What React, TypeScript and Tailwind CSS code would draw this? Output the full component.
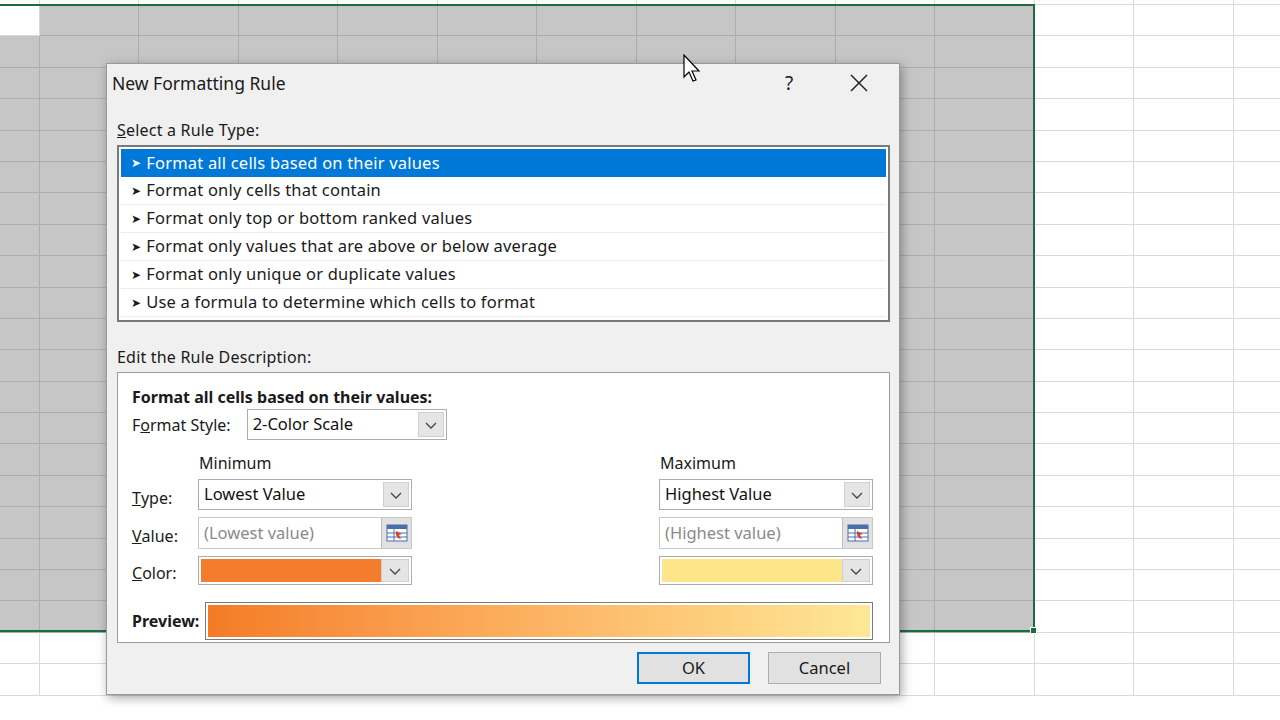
import React from "react";

const cols = [40, 99, 100, 99, 100, 99, 100, 99, 100, 99, 100, 99, 100, 48];

function Chevron() {
  return (
    <svg width="14" height="14" viewBox="0 0 14 14"><path d="M2 5 L7 10 L12 5" fill="none" stroke="#444" strokeWidth="1.3" /></svg>
  );
}

function Drop({ w, text }: { w: string; text: string }) {
  return (
    <div className={`flex h-[31px] ${w} border border-[#adadad] bg-white`}>
      <div className="flex-1 pl-[5px] flex items-center text-[16.5px] text-[#111]">{text}</div>
      <div className="w-[26px] m-[2px] bg-[#e5e5e5] border border-[#cfcfcf] flex items-center justify-center"><Chevron /></div>
    </div>
  );
}

function RefIcon() {
  return (
    <div className="w-[30px] h-full bg-[#e1e1e1] border-l border-[#bdbdbd] flex items-center justify-center">
      <svg width="22" height="18" viewBox="0 0 22 18">
        <rect x="1" y="1" width="20" height="16" fill="#fff" stroke="#4a6ea8" />
        <rect x="1" y="1" width="20" height="4" fill="#4a6ea8" />
        <line x1="1" y1="9" x2="21" y2="9" stroke="#4a6ea8" />
        <line x1="1" y1="13" x2="21" y2="13" stroke="#4a6ea8" />
        <line x1="8" y1="5" x2="8" y2="17" stroke="#4a6ea8" />
        <path d="M10 7 L16 10 L13 11 L15 15 L12 14 L10 11 Z" fill="#d9412b" />
      </svg>
    </div>
  );
}

function Val({ text }: { text: string }) {
  return (
    <div className="flex h-[32px] w-[214px] border border-[#c8c8c8] bg-white">
      <div className="flex-1 pl-[5px] flex items-center text-[16.5px] text-[#8a8a8a]">{text}</div>
      <RefIcon />
    </div>
  );
}

function ColorDrop({ color }: { color: string }) {
  return (
    <div className="flex h-[29px] w-[214px] border border-[#adadad] bg-white p-[2px]">
      <div className={`flex-1 ${color}`} />
      <div className="w-[28px] bg-[#e5e5e5] border border-[#cfcfcf] flex items-center justify-center"><Chevron /></div>
    </div>
  );
}

const items = [
  "Format all cells based on their values",
  "Format only cells that contain",
  "Format only top or bottom ranked values",
  "Format only values that are above or below average",
  "Format only unique or duplicate values",
  "Use a formula to determine which cells to format",
];

export default function App() {
  return (
    <div className="relative w-[1280px] h-[720px] overflow-hidden bg-white" style={{ fontFamily: '"Noto Sans", "Open Sans", sans-serif' }}>
      <div className="flex flex-col">
        {Array.from({ length: 23 }).map((_, r) => (
          <div key={r} className={`flex ${r === 0 ? "h-[5px]" : "h-[31.4px]"}`}>
            {cols.map((w, c) => {
              const sel = r >= 1 && r <= 20 && c <= 10 && !(r === 1 && c === 0);
              return (
                <div
                  key={c}
                  style={{ width: w }}
                  className={`shrink-0 border-r border-b ${sel ? "bg-[#c6c6c6] border-[#adadad]" : "bg-white border-[#dadada]"}`}
                />
              );
            })}
          </div>
        ))}
      </div>
      <div className="absolute left-0 top-[4px] w-[1035px] h-[628px] border-2 border-l-0 border-[#1e6b40]" />
      <div className="absolute left-[1030px] top-[627px] w-[7px] h-[7px] bg-[#1e6b40] border border-white" />

      <div className="absolute left-[106px] top-[63px] w-[794px] h-[632px] bg-[#f0f0f0] border border-[#9a9a9a] shadow-[2px_3px_10px_rgba(0,0,0,0.35)] text-[#1a1a1a] flex flex-col">
        <div className="h-[38px] flex items-center pl-[5px] text-[17.5px]">
          <span className="flex-1">New Formatting Rule</span>
          <span className="w-[60px] text-center text-[19px]">?</span>
          <span className="w-[80px] flex justify-center">
            <svg width="18" height="18" viewBox="0 0 18 18"><path d="M1 1 L17 17 M17 1 L1 17" stroke="#222" strokeWidth="1.5" /></svg>
          </span>
        </div>
        <div className="px-[10px] flex flex-col">
          <div className="mt-[18px] text-[16px] leading-[20px] tracking-[0.2px]"><u>S</u>elect a Rule Type:</div>
          <div className="mt-[5px] w-[773px] h-[177px] border-2 border-[#7a7a7a] bg-white p-[2px] flex flex-col">
            {items.map((t, i) => (
              <div key={t} className={`h-[28px] shrink-0 flex items-center pl-[10px] text-[16.5px] tracking-[0.2px] ${i === 0 ? "bg-[#0078d7] text-white" : "border-b border-[#ececec]"}`}>
                <span className="mr-[5px] text-[12px]">➤</span>{t}
              </div>
            ))}
          </div>
          <div className="mt-[25px] text-[16px] leading-[20px] tracking-[0.2px]">Edit the Rule Description:</div>
          <div className="mt-[5px] w-[773px] h-[271px] border border-[#9c9c9c] bg-white px-[14px] pt-[13px] flex flex-col">
            <div className="font-bold text-[16px] leading-[22px]">Format all cells based on their values:</div>
            <div className="flex items-center gap-[16px] mt-[1px]">
              <span className="text-[16px]">F<u>o</u>rmat Style:</span>
              <Drop w="w-[200px]" text="2-Color Scale" />
            </div>
            <div className="flex mt-[14px]">
              <div className="w-[66px] flex flex-col text-[16px]">
                <div className="h-[25px]" />
                <div className="h-[38px] flex items-center"><u>T</u>ype:</div>
                <div className="h-[38px] flex items-center"><u>V</u>alue:</div>
                <div className="h-[36px] flex items-center"><u>C</u>olor:</div>
              </div>
              <div className="flex flex-col gap-[7px]">
                <div className="h-[18px] text-[16px] leading-[18px] pl-[1px]">Minimum</div>
                <Drop w="w-[214px]" text="Lowest Value" />
                <Val text="(Lowest value)" />
                <ColorDrop color="bg-[#f47c2c]" />
              </div>
              <div className="flex-1" />
              <div className="flex flex-col gap-[7px] mr-[2px]">
                <div className="h-[18px] text-[16px] leading-[18px] pl-[1px]">Maximum</div>
                <Drop w="w-[214px]" text="Highest Value" />
                <Val text="(Highest value)" />
                <ColorDrop color="bg-[#fde68a]" />
              </div>
            </div>
            <div className="flex items-center mt-[11px]">
              <span className="w-[73px] font-bold text-[16px]">Preview:</span>
              <div className="flex-1 mr-[2px] h-[38px] border border-[#7a7a7a] p-[2px] bg-white">
                <div className="w-full h-full bg-gradient-to-r from-[#f47b24] to-[#fde896]" />
              </div>
            </div>
          </div>
          <div className="flex justify-end gap-[18px] mt-[9px] mr-[8px]">
            <div className="w-[113px] h-[32px] border-2 border-[#0078d7] bg-[#e1e1e1] flex items-center justify-center text-[16.5px]">OK</div>
            <div className="w-[113px] h-[32px] border border-[#adadad] bg-[#e1e1e1] flex items-center justify-center text-[16.5px]">Cancel</div>
          </div>
        </div>
      </div>
      <svg className="absolute left-[683px] top-[54px]" width="20" height="30" viewBox="0 0 20 30">
        <path d="M1 1 L1 23 L6 18 L10 27 L13 26 L9 17 L16 17 Z" fill="#fff" stroke="#000" strokeWidth="1.2" />
      </svg>
    </div>
  );
}
